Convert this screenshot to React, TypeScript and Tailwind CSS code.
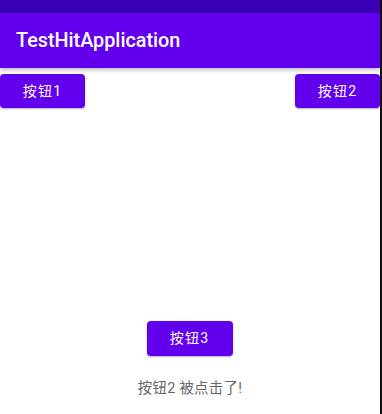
export default function App() {
  return (
    <div className="flex h-[414px] w-[382px] overflow-hidden bg-white font-['Roboto','Noto_Sans_CJK_SC',sans-serif]">
      <div className="flex w-[380px] flex-col">
        <div className="h-[13px] bg-[#3700B3]" />
        <div className="relative z-10 flex h-[55px] items-center bg-[#6200EE] px-4 shadow-[0_2px_4px_rgba(0,0,0,0.25)]">
          <span className="text-[19.8px] font-medium text-white">TestHitApplication</span>
        </div>
        <div className="mt-[6px] flex justify-between">
          <button
            type="button"
            className="h-[34px] w-[85px] rounded-[4px] bg-[#6200EE] text-[14px] tracking-[0.09em] text-white shadow-[0_1px_2px_rgba(0,0,0,0.3)]"
          >
            按钮1
          </button>
          <button
            type="button"
            className="h-[34px] w-[85px] rounded-[4px] bg-[#6200EE] text-[14px] tracking-[0.09em] text-white shadow-[0_1px_2px_rgba(0,0,0,0.3)]"
          >
            按钮2
          </button>
        </div>
        <div className="mt-[213px] flex justify-center pr-[1px]">
          <button
            type="button"
            className="h-[35px] w-[86px] rounded-[4px] bg-[#6200EE] text-[14px] tracking-[0.09em] text-white shadow-[0_1px_2px_rgba(0,0,0,0.3)]"
          >
            按钮3
          </button>
        </div>
        <p className="mt-[22px] text-center text-[14.4px] tracking-[0.02em] text-[#666666]">按钮2 被点击了!</p>
      </div>
      <div className="w-[2px] bg-[#111111]" />
    </div>
  );
}
